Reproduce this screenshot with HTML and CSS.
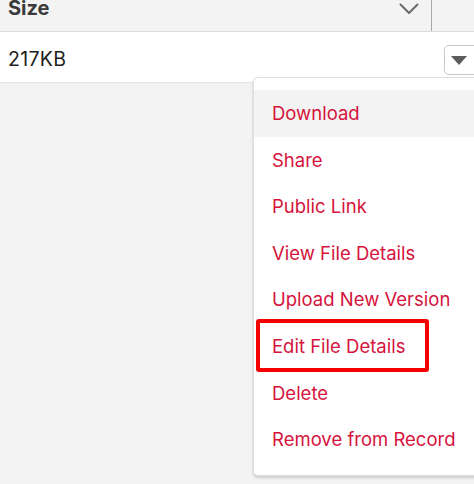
FILE: index.html
```html
<!DOCTYPE html>
<html>
<head>
<meta charset="utf-8">
<link rel="stylesheet" href="styles.css">
</head>
<body>
<div class="table">
  <div class="thead">
    <span class="th-label">Size</span>
    <svg class="chev" width="20" height="12" viewBox="0 0 20 12"><path d="M1.5 1.5 L10 10 L18.5 1.5" fill="none" stroke="#6b6b6b" stroke-width="2" stroke-linecap="round" stroke-linejoin="round"/></svg>
    <span class="th-divider"></span>
    <span class="th-rest"></span>
  </div>
  <div class="trow">
    <span class="cell">217KB</span>
    <button class="menu-btn"><svg width="16" height="10" viewBox="0 0 16 10"><path d="M0 0 H16 L8 9 Z" fill="#5c5c5c"/></svg></button>
  </div>
</div>
<ul class="menu">
  <li class="item active">Download</li>
  <li class="item">Share</li>
  <li class="item">Public Link</li>
  <li class="item">View File Details</li>
  <li class="item">Upload New Version</li>
  <li class="item">Edit File Details</li>
  <li class="item">Delete</li>
  <li class="item">Remove from Record</li>
</ul>
<div class="highlight"></div>
</body>
</html>
```
FILE: styles.css
```css
html, body {
  margin: 0;
  padding: 0;
  width: 474px;
  height: 484px;
  overflow: hidden;
  background: #f3f3f3;
  font-family: Inter, "Open Sans", sans-serif;
}
.table {
  width: 474px;
}
.thead {
  height: 31px;
  border-bottom: 1px solid #dcdcdc;
  background: #f3f3f3;
  display: flex;
  align-items: flex-start;
  overflow: hidden;
}
.th-label {
  font-weight: 700;
  font-size: 20px;
  line-height: 20px;
  color: #3a3a3a;
  margin: -2px 0 0 8px;
  flex: 1;
}
.chev {
  margin: 3px 12px 0 0;
}
.th-divider {
  width: 1px;
  height: 31px;
  background: #a9a9a9;
}
.th-rest {
  width: 42px;
}
.trow {
  height: 50px;
  background: #fff;
  border-bottom: 1px solid #e2e2e2;
  display: flex;
  align-items: center;
  justify-content: space-between;
}
.cell {
  font-size: 19.5px;
  letter-spacing: 0.3px;
  color: #1d1d1d;
  margin: 3px 0 0 8px;
}
.menu-btn {
  width: 36px;
  height: 30px;
  margin: 5px -6px 0 0;
  border: 1px solid #c9c9c9;
  border-radius: 5px;
  background: #fff;
  padding: 0 0 0 6px;
  display: flex;
  align-items: center;
  justify-content: flex-start;
}
.menu-btn svg {
  margin-top: 2px;
}
.menu {
  position: absolute;
  left: 253px;
  top: 77px;
  width: 240px;
  height: 385px;
  margin: 0;
  padding: 12px 0 0 0;
  list-style: none;
  background: #fff;
  border: 1px solid #dedede;
  border-radius: 5px;
  box-shadow: 0 2px 3px rgba(0, 0, 0, 0.16);
}
.item {
  height: 46.6px;
  line-height: 47px;
  padding-left: 18px;
  font-size: 18.5px;
  color: #d5133c;
  white-space: nowrap;
}
.item.active {
  background: #f3f3f3;
}
.highlight {
  position: absolute;
  left: 256px;
  top: 319px;
  width: 165px;
  height: 45px;
  border: 4px solid #f50000;
  border-radius: 3px;
}
```
